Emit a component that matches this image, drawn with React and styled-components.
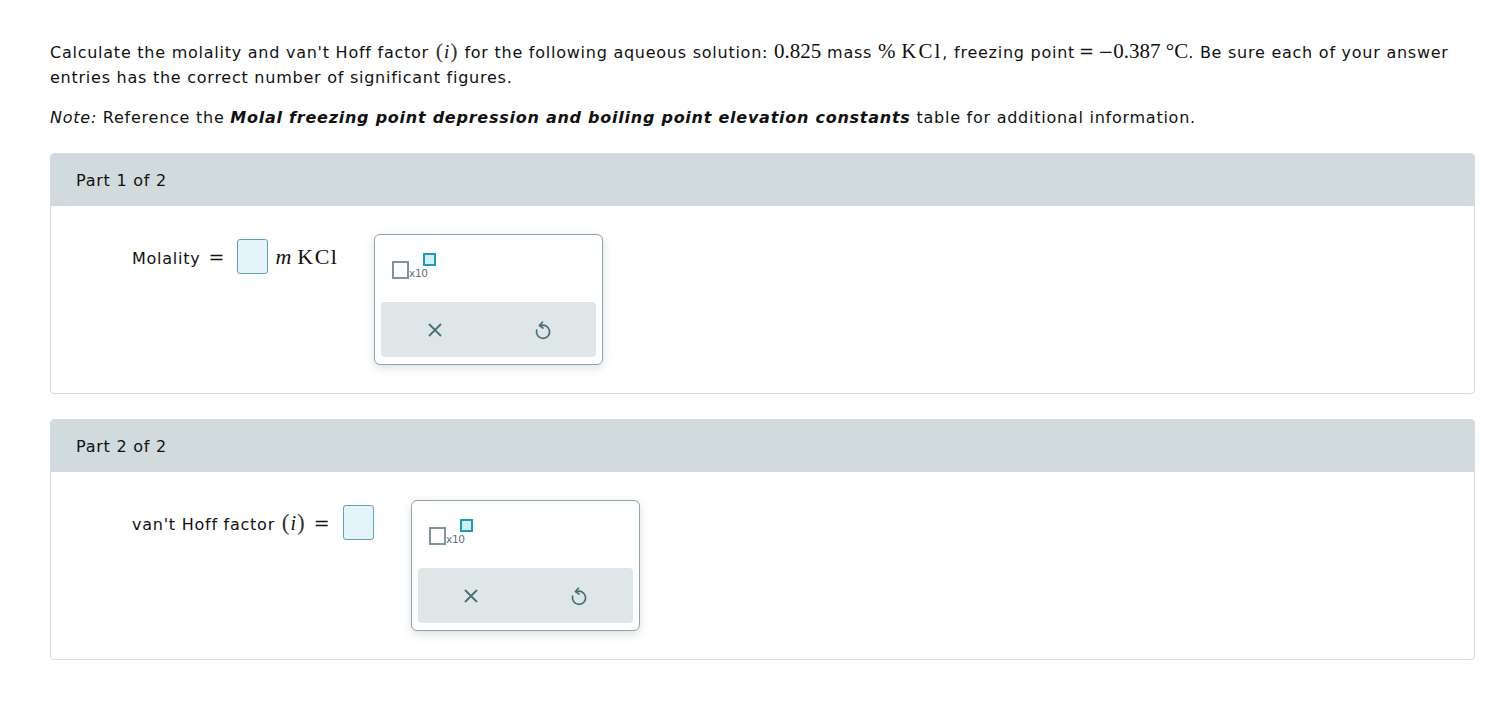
import React from 'react';
import styled, { createGlobalStyle } from 'styled-components';

const GlobalStyle = createGlobalStyle`
	body {
		margin: 0;
		background: #fff;
		font-family: Verdana, "DejaVu Sans", sans-serif;
		color: #111;
		letter-spacing: 0.75px;
	}
`;

const Page = styled.div`
	padding: 39px 22px 40px 50px;
`;

const Prompt = styled.p`
	margin: 0;
	font-size: 16px;
	line-height: 25px;
`;

const Note = styled.p`
	margin: 15px 0 0;
	font-size: 16px;
	line-height: 25px;
	em { font-style: italic; }
	b { font-weight: bold; font-style: italic; }
`;

const M = styled.span`
	font-family: "Liberation Serif", "Times New Roman", serif;
	font-size: ${p => p.$size ?? 21}px;
	letter-spacing: ${p => p.$track ?? 0}px;
	font-style: ${p => (p.$it ? 'italic' : 'normal')};
	white-space: nowrap;
`;

const Op = styled.span`
	font-family: "DejaVu Serif", serif;
	font-size: 18px;
	letter-spacing: 0;
	margin: 0 ${p => p.$space ?? 3}px;
`;

const Paren = styled.span`
	font-family: "Liberation Serif", serif;
	font-size: 1.15em;
	color: #333;
	letter-spacing: 0;
	margin: 0 1px;
`;

const Card = styled.section`
	margin-top: ${p => p.$top}px;
	border: 1px solid #d3dcdf;
	border-radius: 4px;
	overflow: hidden;
`;

const CardHead = styled.div`
	background: #d1dadd;
	height: 52px;
	display: flex;
	align-items: center;
	padding-left: 25px;
	font-size: 16px;
`;

const CardBody = styled.div`
	padding: 28px 0 28px 81px;
	display: flex;
	align-items: flex-start;
`;

const Equation = styled.div`
	display: flex;
	align-items: center;
	margin-top: 5px;
	font-size: 16px;
`;

const Label = styled.span`
	padding-top: 3px;
`;

const Equals = styled.span`
	font-family: "DejaVu Serif", serif;
	font-size: 19px;
	letter-spacing: 0;
	margin: 0 ${p => p.$after ?? 13}px 0 ${p => p.$before ?? 8}px;
`;

const AnswerBox = styled.div`
	width: 29px;
	height: 33px;
	border: 1px solid #5fa3b3;
	border-radius: 3px;
	background: #e5f4f8;
	box-sizing: content-box;
`;

const Unit = styled.span`
	margin-left: 7px;
	display: flex;
	gap: 6px;
	align-items: baseline;
`;

const Palette = styled.div`
	margin-left: ${p => p.$gap}px;
	width: 229px;
	border: 1px solid #8ea3ab;
	border-radius: 6px;
	background: #fff;
	box-shadow: 0 3px 10px rgba(60, 80, 90, 0.18);
	padding: 7px 6px;
	box-sizing: border-box;
	display: flex;
	flex-direction: column;
`;

const Keys = styled.div`
	height: 60px;
	padding: 11px 0 0 11px;
	display: flex;
	align-items: flex-start;
	box-sizing: border-box;
`;

const Actions = styled.div`
	height: 55px;
	background: #dfe6e8;
	border-radius: 4px;
	display: grid;
	grid-template-columns: 1fr 1fr;
`;

const ActionBtn = styled.button`
	border: 0;
	background: transparent;
	display: flex;
	align-items: center;
	justify-content: center;
	padding: 0;
	color: #4a6e79;
	cursor: pointer;
`;

const SciIcon = () => (
	<svg width="46" height="28" viewBox="0 0 46 28">
		<rect x="1" y="9" width="15" height="16" fill="#fff" stroke="#7f959c" strokeWidth="2" />
		<text x="17" y="24" fontSize="10.5" fontFamily="Verdana, 'DejaVu Sans', sans-serif" fill="#5d7279" letterSpacing="-0.3">x10</text>
		<rect x="32" y="1" width="11" height="11" fill="#cfeef4" stroke="#1f9bb3" strokeWidth="2" />
	</svg>
);

const XIcon = () => (
	<svg width="16" height="16" viewBox="0 0 16 16">
		<path d="M2 2 L14 14 M14 2 L2 14" stroke="currentColor" strokeWidth="1.8" fill="none" />
	</svg>
);

const UndoIcon = () => (
	<svg width="24" height="24" viewBox="0 0 24 24">
		<path d="M9.4 7.7 A6.6 6.6 0 1 1 5.6 12.2" stroke="currentColor" strokeWidth="1.7" fill="none" strokeLinecap="round" />
		<path d="M11.4 4.2 L8.4 7.6 L12 10" stroke="currentColor" strokeWidth="1.7" fill="none" strokeLinecap="round" strokeLinejoin="round" />
	</svg>
);

const AnswerPalette = ({ gap }) => (
	<Palette $gap={gap}>
		<Keys>
			<SciIcon />
		</Keys>
		<Actions>
			<ActionBtn aria-label="clear"><XIcon /></ActionBtn>
			<ActionBtn aria-label="undo"><UndoIcon /></ActionBtn>
		</Actions>
	</Palette>
);

const FactorI = ({ size }) => (
	<M $size={size}>
		<Paren>(</Paren>
		<M $it $size={size}>i</M>
		<Paren>)</Paren>
	</M>
);

export default function App() {
	return (
		<Page>
			<GlobalStyle />
			<Prompt>
				Calculate the molality and van't Hoff factor <FactorI size={19} /> for the following aqueous solution:{' '}
				<M>0.825</M> mass <M>%</M> <M $track={2}>KCl</M>, freezing point<M><Op $space={4}>=</Op><Op $space={0}>−</Op>0.387 °C</M>.
				Be sure each of your answer entries has the correct number of significant figures.
			</Prompt>
			<Note>
				<em>Note:</em> Reference the <b>Molal freezing point depression and boiling point elevation constants</b> table
				for additional information.
			</Note>

			<Card $top={23}>
				<CardHead>Part 1 of 2</CardHead>
				<CardBody>
					<Equation>
						<Label>Molality</Label>
						<Equals>=</Equals>
						<AnswerBox />
						<Unit>
							<M $it $size={22}>m</M>
							<M $size={22} $track={1.5}>KCl</M>
						</Unit>
					</Equation>
					<AnswerPalette gap={36} />
				</CardBody>
			</Card>

			<Card $top={25}>
				<CardHead>Part 2 of 2</CardHead>
				<CardBody>
					<Equation>
						<Label>van't Hoff factor&nbsp;</Label>
						<FactorI size={20} />
						<Equals $before={8} $after={13}>=</Equals>
						<AnswerBox />
					</Equation>
					<AnswerPalette gap={37} />
				</CardBody>
			</Card>
		</Page>
	);
}
